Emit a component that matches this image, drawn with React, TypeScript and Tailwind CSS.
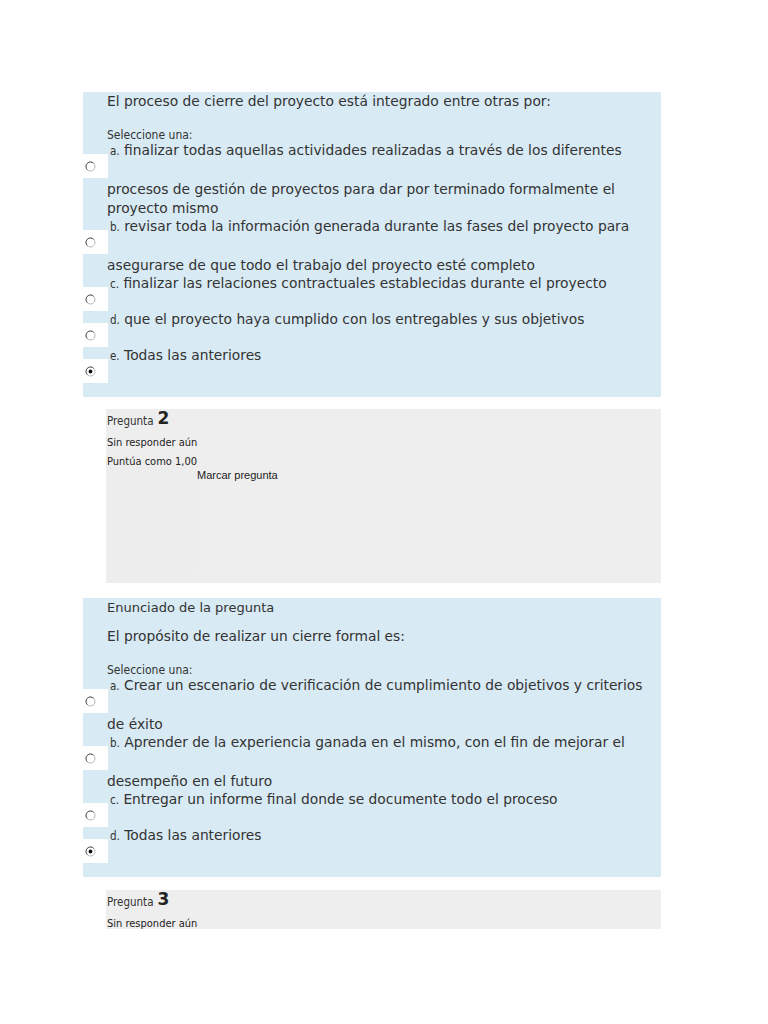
import React from "react";

type Option = {
  letter: string;
  first: string;
  rest?: string[];
  checked?: boolean;
};

const q1: Option[] = [
  {
    letter: "a.",
    first: "finalizar todas aquellas actividades realizadas a través de los diferentes",
    rest: [
      "procesos de gestión de proyectos para dar por terminado formalmente el",
      "proyecto mismo",
    ],
  },
  {
    letter: "b.",
    first: "revisar toda la información generada durante las fases del proyecto para",
    rest: ["asegurarse de que todo el trabajo del proyecto esté completo"],
  },
  { letter: "c.", first: "finalizar las relaciones contractuales establecidas durante el proyecto" },
  { letter: "d.", first: "que el proyecto haya cumplido con los entregables y sus objetivos" },
  { letter: "e.", first: "Todas las anteriores", checked: true },
];

const q2: Option[] = [
  {
    letter: "a.",
    first: "Crear un escenario de verificación de cumplimiento de objetivos y criterios",
    rest: ["de éxito"],
  },
  {
    letter: "b.",
    first: "Aprender de la experiencia ganada en el mismo, con el fin de mejorar el",
    rest: ["desempeño en el futuro"],
  },
  { letter: "c.", first: "Entregar un informe final donde se documente todo el proceso" },
  { letter: "d.", first: "Todas las anteriores", checked: true },
];

const Radio = ({ checked }: { checked?: boolean }) => (
  <svg width="11" height="11" viewBox="0 0 11 11">
    <circle cx="5.5" cy="5.5" r="4.5" fill="#fff" stroke="#b5b5b5" strokeWidth="1" />
    <path d="M2.3 8.7 A4.5 4.5 0 0 1 8.7 2.3" fill="none" stroke="#5a5a5a" strokeWidth="1" />
    {checked && <circle cx="5.5" cy="5.5" r="1.9" fill="#111" />}
  </svg>
);

const OptionRow = ({ opt }: { opt: Option }) => (
  <div className="flex">
    <div className="w-[24px] shrink-0 pt-[12px]">
      <div className="flex h-[24px] w-[25px] items-center bg-white pl-[2px]">
        <Radio checked={opt.checked} />
      </div>
    </div>
    <div className="flex-1">
      <div className="h-[16px] whitespace-nowrap pl-[3px] leading-[16px]">
        <span className="font-['DejaVu_Sans_Condensed','DejaVu_Sans',sans-serif] text-[11.5px]">
          {opt.letter}
        </span>{" "}
        <span>{opt.first}</span>
      </div>
      <div className={opt.rest ? "h-[22px]" : "h-[20px]"} />
      {opt.rest?.map((line) => (
        <div key={line} className="h-[19px] whitespace-nowrap leading-[19px]">
          {line}
        </div>
      ))}
    </div>
  </div>
);

const Seleccione = () => (
  <div className="h-[14px] font-['DejaVu_Sans_Condensed','DejaVu_Sans',sans-serif] text-[12px] leading-[14px] text-[#333]">
    Seleccione una:
  </div>
);

const QuestionPanel = ({
  heading,
  question,
  options,
}: {
  heading?: string;
  question: string;
  options: Option[];
}) => (
  <div className="w-[578px] bg-[#d8eaf4]">
    <div className="ml-[24px]">
      {heading && (
        <div className="mb-[10px] h-[19px] text-[13px] leading-[19px]">{heading}</div>
      )}
      <div className="mb-[17px] h-[19px] whitespace-nowrap leading-[19px]">{question}</div>
      <Seleccione />
    </div>
    <div className="pb-[14px]">
      {options.map((o) => (
        <OptionRow key={o.letter} opt={o} />
      ))}
    </div>
  </div>
);

const Small = ({ children, className = "" }: { children: React.ReactNode; className?: string }) => (
  <div
    className={
      "whitespace-nowrap font-['DejaVu_Sans_Condensed','DejaVu_Sans',sans-serif] text-[11px] text-[#222] " +
      className
    }
  >
    {children}
  </div>
);

const PreguntaHeader = ({ n }: { n: number }) => (
  <>
    <div className="flex h-[18px] items-end leading-none">
      <span className="font-['DejaVu_Sans_Condensed','DejaVu_Sans',sans-serif] text-[11.5px] text-[#333]">
        Pregunta
      </span>
      <span className="ml-[4px] font-['DejaVu_Sans',sans-serif] text-[17px] font-bold text-[#222]">
        {n}
      </span>
    </div>
    <Small className="mt-[7px] h-[18px] leading-[18px]">Sin responder aún</Small>
  </>
);

export default function App() {
  return (
    <div className="min-h-[1024px] w-[768px] bg-white pt-[92px] font-['DejaVu_Sans',sans-serif] text-[13.8px] text-[#333]">
      <div className="ml-[83px]">
        <QuestionPanel
          question="El proceso de cierre del proyecto está integrado entre otras por:"
          options={q1}
        />

        <div className="ml-[23px] mt-[12px] h-[174px] w-[555px] bg-[#eeeeee] pl-[1px]">
          <PreguntaHeader n={2} />
          <div className="flex pt-[1px]">
            <div className="h-[120px] w-[90px] shrink-0 bg-[#ededed]">
              <Small className="h-[18px] leading-[18px]">Puntúa como 1,00</Small>
            </div>
            <div className="pt-[15px] font-['Liberation_Sans',sans-serif] text-[11px] leading-[14px] text-[#222]">
              Marcar pregunta
            </div>
          </div>
        </div>

        <div className="mt-[15px]">
          <QuestionPanel
            heading="Enunciado de la pregunta"
            question="El propósito de realizar un cierre formal es:"
            options={q2}
          />
        </div>

        <div className="ml-[23px] mt-[13px] h-[39px] w-[555px] overflow-hidden bg-[#eeeeee] pl-[1px]">
          <PreguntaHeader n={3} />
        </div>
      </div>
    </div>
  );
}
